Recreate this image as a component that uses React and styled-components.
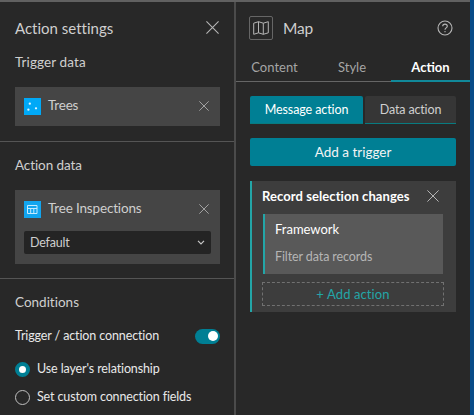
import React from 'react';
import styled, { createGlobalStyle } from 'styled-components';

const GlobalStyle = createGlobalStyle`
  :root {
    --panel: #282828;
    --card: #454545;
    --teal: #007f94;
    --teal-light: #23a6a8;
    --line: #555555;
  }

  * {
    box-sizing: border-box;
  }

  body {
    margin: 0;
    background: var(--panel);
    font-family: Lato, 'Open Sans', sans-serif;
    font-variant-ligatures: none;
    overflow: hidden;
  }

  button {
    font-family: inherit;
    padding: 0;
    border: 0;
    background: none;
    color: inherit;
  }
`

const CloseIcon = ({ size }) => (
  <svg width={size} height={size} viewBox="0 0 12 12" fill="none" stroke="#b5b5b5" strokeWidth="1">
    <path d="M.4 .4 11.6 11.6M11.6 .4 .4 11.6" />
  </svg>
)

const PointsIcon = () => (
  <svg width="17" height="17" viewBox="0 0 17 17">
    <rect width="17" height="17" fill="#00a9f7" />
    <g fill="#e4f6ff">
      <circle cx="5.8" cy="5.7" r="1.15" />
      <circle cx="4.4" cy="11.7" r="1.15" />
      <circle cx="12" cy="10.3" r="1.15" />
    </g>
  </svg>
)

const TableIcon = () => (
  <svg width="17" height="17" viewBox="0 0 17 17">
    <rect width="17" height="17" fill="#12a5ef" />
    <path d="M3.5 4.5h9.5v8h-9.5zM3.5 7.5h9.5M6.7 7.5v5M9.8 7.5v5" fill="none" stroke="#c5ebff" strokeWidth="1" />
  </svg>
)

const MapIcon = () => (
  <svg width="16" height="14" viewBox="0 0 16 14" fill="none" stroke="#b5b5b5" strokeWidth="1">
    <path d="M.7 2.2 5.5 .7 10.3 2.2 15.3 .7V11.8L10.3 13.3 5.5 11.8 .7 13.3zM5.5 .7V11.8M10.3 2.2V13.3" />
  </svg>
)

const HelpIcon = () => (
  <svg width="16" height="16" viewBox="0 0 16 16" fill="none" stroke="#b5b5b5" strokeWidth="1.1">
    <circle cx="8" cy="8" r="7" />
    <path d="M5.7 6.3C5.7 3.4 10.3 3.5 10.3 6.2C10.3 7.8 8 8 8 9.7M8 11v1.3" />
  </svg>
)

const ChevronIcon = () => (
  <svg width="8" height="5" viewBox="0 0 8 5" fill="none" stroke="#c8c8c8" strokeWidth="1.2">
    <path d="M1 .8 4 3.8 7 .8" />
  </svg>
)

const App = () => {
  return (
    <Builder>
      <GlobalStyle />
      <Settings>
        <SettingsHeader>
          <Text $size={15}>Action settings</Text>
          <IconButton aria-label="Close settings"><CloseIcon size={13} /></IconButton>
        </SettingsHeader>
        <TriggerSection>
          <Text $size={13.5} $spacing={0.1}>Trigger data</Text>
          <DataCard>
            <DataRow>
              <PointsIcon />
              <Text $size={13.5} $spacing={-0.2}>Trees</Text>
              <IconButton aria-label="Remove Trees"><CloseIcon size={10} /></IconButton>
            </DataRow>
          </DataCard>
        </TriggerSection>
        <ActionSection>
          <Text $size={13.5} $spacing={-0.1}>Action data</Text>
          <DataCard>
            <DataRow>
              <TableIcon />
              <Text $size={13.5} $spacing={-0.17}>Tree Inspections</Text>
              <IconButton aria-label="Remove Tree Inspections"><CloseIcon size={10} /></IconButton>
            </DataRow>
            <Select>
              <Text $size={12.5} $spacing={-0.2}>Default</Text>
              <ChevronIcon />
            </Select>
          </DataCard>
        </ActionSection>
        <Conditions>
          <Text $size={13.5}>Conditions</Text>
          <SwitchRow>
            <Text $size={12.5} $spacing={-0.12} $color="#e8e8e8">Trigger / action connection</Text>
            <Switch role="switch" aria-checked="true" />
          </SwitchRow>
          <RadioRow>
            <Radio $checked />
            <Text $size={12.5} $spacing={-0.12} $color="#e8e8e8">Use layer's relationship</Text>
          </RadioRow>
          <RadioRow>
            <Radio />
            <Text $size={12.5} $spacing={-0.13} $color="#e8e8e8">Set custom connection fields</Text>
          </RadioRow>
        </Conditions>
      </Settings>

      <Widget>
        <WidgetHeader>
          <IconFrame><MapIcon /></IconFrame>
          <Text $size={15.5} $spacing={-0.2}>Map</Text>
          <IconButton aria-label="Help"><HelpIcon /></IconButton>
        </WidgetHeader>
        <Tabs>
          <Tab><Text $size={13} $color="#a5a5a5">Content</Text></Tab>
          <Tab><Text $size={13} $color="#a5a5a5">Style</Text></Tab>
          <Tab $active><Text $size={13} $color="#fff" $weight={700}>Action</Text></Tab>
        </Tabs>
        <WidgetBody>
          <ActionTypes>
            <ActionType $active><Text $size={12.5} $spacing={-0.1} $color="#fff">Message action</Text></ActionType>
            <ActionType><Text $size={12.5} $spacing={-0.15}>Data action</Text></ActionType>
          </ActionTypes>
          <AddTrigger><Text $size={13.5} $color="#f4f4f4">Add a trigger</Text></AddTrigger>
          <TriggerCard>
            <TriggerHeader>
              <Text $size={13} $spacing={0.07} $color="#fff" $weight={700}>Record selection changes</Text>
              <IconButton aria-label="Remove trigger"><CloseIcon size={12} /></IconButton>
            </TriggerHeader>
            <Target>
              <Text $size={13} $color="#fff">Framework</Text>
              <Text $size={12.5} $spacing={-0.1} $color="#b5b5b5">Filter data records</Text>
            </Target>
            <AddAction><Text $size={13} $spacing={0.1} $color="#23a6a8">+ Add action</Text></AddAction>
          </TriggerCard>
        </WidgetBody>
      </Widget>
    </Builder>
  )
}

export default App;

const Builder = styled.main`
  display: flex;
  width: 474px;
  height: 415px;
  background: linear-gradient(#616161 2px, var(--panel) 2px);
  padding-top: 2px;
`

const Text = styled.span`
  display: block;
  font-size: ${({ $size }) => $size}px;
  line-height: 18px;
  font-weight: ${({ $weight }) => $weight || 400};
  letter-spacing: ${({ $spacing }) => $spacing || 0}px;
  color: ${({ $color }) => $color || '#cfcfcf'};
  white-space: nowrap;
`

const IconButton = styled.button`
  display: flex;
  margin-left: auto;
`

const Settings = styled.aside`
  width: 236px;
  border-right: 2px solid #4b4b4b;
`

const SettingsHeader = styled.header`
  display: flex;
  align-items: center;
  height: 51px;
  padding: 0 15px 0 15px;
`

const TriggerSection = styled.section`
  height: 89px;
  padding: 0 14px 0 15px;
  border-bottom: 1px solid var(--line);
`

const ActionSection = styled.section`
  height: 137px;
  padding: 14px 14px 0 15px;
  border-bottom: 1px solid var(--line);
`

const DataCard = styled.div`
  margin-top: 16px;
  padding: 9px 9px 10px 9px;
  background: var(--card);
`

const DataRow = styled.div`
  display: flex;
  align-items: center;
  height: 20px;
  gap: 7px;

  ${Text} {
    margin-bottom: 2px;
  }

  ${IconButton} {
    margin-right: 2px;
  }
`

const Select = styled.div`
  display: flex;
  align-items: center;
  justify-content: space-between;
  height: 23px;
  margin-top: 12px;
  padding: 0 6px;
  border-radius: 2px;
  background: #242424;
`

const Conditions = styled.section`
  padding: 14px 14px 0 15px;
`

const SwitchRow = styled.div`
  display: flex;
  align-items: center;
  justify-content: space-between;
  margin: 16px 0 10px;
`

const Switch = styled.button`
  display: flex;
  align-items: center;
  justify-content: flex-end;
  width: 25px;
  height: 15px;
  padding-right: 2px;
  border-radius: 8px;
  background: var(--teal);

  &::after {
    content: '';
    width: 10px;
    height: 10px;
    border-radius: 50%;
    background: #fff;
  }
`

const RadioRow = styled.label`
  display: flex;
  align-items: center;
  gap: 7px;
  height: 28px;
`

const Radio = styled.i`
  width: 15px;
  height: 15px;
  border: ${({ $checked }) => ($checked ? '4.5px solid var(--teal)' : '1.3px solid #c0c0c0')};
  border-radius: 50%;
  background: ${({ $checked }) => ($checked ? '#fff' : 'transparent')};
`

const Widget = styled.section`
  width: 238px;
  height: 415px;
  margin-top: -2px;
  padding-top: 2px;
  border-right: 4px solid #074b87;
`

const WidgetHeader = styled.header`
  display: flex;
  align-items: center;
  height: 51px;
  padding: 0 17px 0 13px;
  gap: 10px;
`

const IconFrame = styled.div`
  display: grid;
  place-items: center;
  width: 24px;
  height: 24px;
  border: 1px solid #666;
  border-radius: 2px;
`

const Tabs = styled.nav`
  display: grid;
  grid-template-columns: 77px 78px 79px;
  height: 29px;
  border-bottom: 1px solid #666;
`

const Tab = styled.button`
  display: flex;
  justify-content: center;
  align-items: flex-start;
  height: 29px;
  padding-top: 5px;
  border-bottom: 2px solid ${({ $active }) => ($active ? '#11899a' : 'transparent')};
`

const WidgetBody = styled.div`
  padding: 14px 14px 0 14px;
`

const ActionTypes = styled.div`
  display: grid;
  grid-template-columns: 113px 1fr;
  gap: 2px;
  height: 28px;
`

const ActionType = styled.button`
  display: grid;
  place-items: center;
  border-bottom: 1px solid #087b80;
  border-radius: 2px 2px 0 0;
  background: ${({ $active }) => ($active ? 'var(--teal)' : '#363636')};
`

const AddTrigger = styled.button`
  display: grid;
  place-items: center;
  width: 100%;
  height: 28px;
  margin: 14px 0 15px;
  border-radius: 2px;
  background: var(--teal);
`

const TriggerCard = styled.article`
  height: 131px;
  padding: 6px 12px 0 10px;
  border-left: 2px solid var(--teal-light);
  background: #3d3d3d;
`

const TriggerHeader = styled.div`
  display: flex;
  align-items: center;
  margin-bottom: 9px;

  ${IconButton} {
    margin-right: 5px;
  }
`

const Target = styled.div`
  display: flex;
  flex-direction: column;
  gap: 10px;
  height: 60px;
  margin: 0 1px;
  padding: 6px 10px;
  border-left: 2px solid var(--teal-light);
  background: #595959;
`

const AddAction = styled.button`
  display: grid;
  place-items: center;
  width: 182px;
  height: 24px;
  margin-top: 8px;
  border: 1px dashed #717171;
`
